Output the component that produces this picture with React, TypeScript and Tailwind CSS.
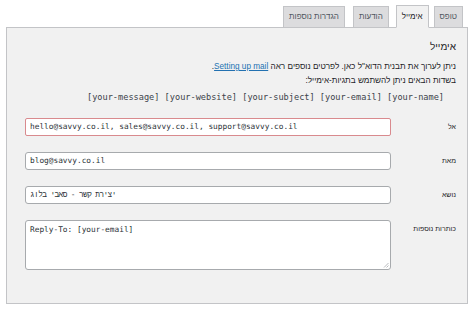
export default function App() {
  const mono = { fontFamily: '"DejaVu Sans Mono", "Liberation Mono", monospace' };
  return (
    <div
      dir="rtl"
      className="w-[474px] h-[310px] bg-white pt-[6px] pr-[6px] pl-[6px] text-[#3c434a]"
      style={{ fontFamily: '"Liberation Sans", Arial, sans-serif' }}
    >
      <div className="flex gap-[5px] pr-[5px] relative z-10">
        <div className="h-[22px] px-[5px] flex items-center border border-[#c3c4c7] bg-[#dcdcde] text-[8px] text-[#50575e] mb-[-1px]">טופס</div>
        <div className="h-[23px] px-[5px] flex items-center border border-[#c3c4c7] border-b-[#f1f1f1] bg-[#f1f1f1] text-[8px] text-[#1d2327] mb-[-1px] mt-[-1px]">אימייל</div>
        <div className="h-[22px] px-[5px] flex items-center border border-[#c3c4c7] bg-[#dcdcde] text-[8px] text-[#50575e] mb-[-1px] mr-[2px]">הודעות</div>
        <div className="h-[22px] px-[5px] flex items-center border border-[#c3c4c7] bg-[#dcdcde] text-[8px] text-[#50575e] mb-[-1px] mr-[3px]">הגדרות נוספות</div>
      </div>
      <div className="border border-[#c3c4c7] bg-[#f1f1f1] h-[277px] pr-[11px] pl-[18px] pt-[12px]">
        <div className="text-[10px] text-[#1d2327] leading-[14px]">אימייל</div>
        <div className="mt-[6px] text-[8.2px] leading-[13px] text-[#1d2327]">
          ניתן לערוך את תבנית הדוא"ל כאן. לפרטים נוספים ראה{' '}
          <a className="text-[#2271b1] underline">Setting up mail</a>.
        </div>
        <div className="mt-[1px] text-[8.2px] leading-[13px] text-[#1d2327]">בשדות הבאים ניתן להשתמש בתגיות-אימייל:</div>
        <div dir="ltr" className="mt-[3px] pr-[12px] text-right text-[8.6px] leading-[14px] text-[#3c434a]" style={mono}>
          [your-message] [your-website] [your-subject] [your-email] [your-name]
        </div>
        <div className="mt-[14px] flex flex-col gap-[16px]">
          <div className="flex items-center">
            <div className="w-[65px] text-[7px] text-[#1d2327]">אל</div>
            <div dir="ltr" className="flex-1 h-[18px] border border-[#d98a8e] bg-white rounded-[2px] px-[4px] text-left text-[7.8px] leading-[16px] text-[#2c3338]" style={mono}>
              hello@savvy.co.il, sales@savvy.co.il, support@savvy.co.il
            </div>
          </div>
          <div className="flex items-center">
            <div className="w-[65px] text-[7px] text-[#1d2327]">מאת</div>
            <div dir="ltr" className="flex-1 h-[18px] border border-[#a7aaad] bg-white rounded-[3px] px-[4px] text-left text-[7.8px] leading-[16px] text-[#2c3338]" style={mono}>
              blog@savvy.co.il
            </div>
          </div>
          <div className="flex items-center">
            <div className="w-[65px] text-[7px] text-[#1d2327]">נושא</div>
            <div className="flex-1 h-[18px] border border-[#a7aaad] bg-white rounded-[3px] px-[4px] flex items-center text-[7.8px] text-[#2c3338]" style={mono}>
              <span className="mr-auto tracking-[-0.6px]">יצירת קשר - סאבי בלוג</span>
            </div>
          </div>
          <div className="flex items-start">
            <div className="w-[65px] text-[7px] text-[#1d2327] pt-[4px]">כותרות נוספות</div>
            <div dir="ltr" className="relative flex-1 h-[50px] border border-[#a7aaad] bg-white rounded-[3px] px-[4px] pt-[3px] text-left text-[7.8px] text-[#2c3338]" style={mono}>
              Reply-To: [your-email]
              <svg className="absolute right-[1px] bottom-[1px]" width="6" height="6" viewBox="0 0 6 6">
                <path d="M5.5 1 L1 5.5 M5.5 3.5 L3.5 5.5" stroke="#a7aaad" strokeWidth="0.8" />
              </svg>
            </div>
          </div>
        </div>
      </div>
    </div>
  );
}
